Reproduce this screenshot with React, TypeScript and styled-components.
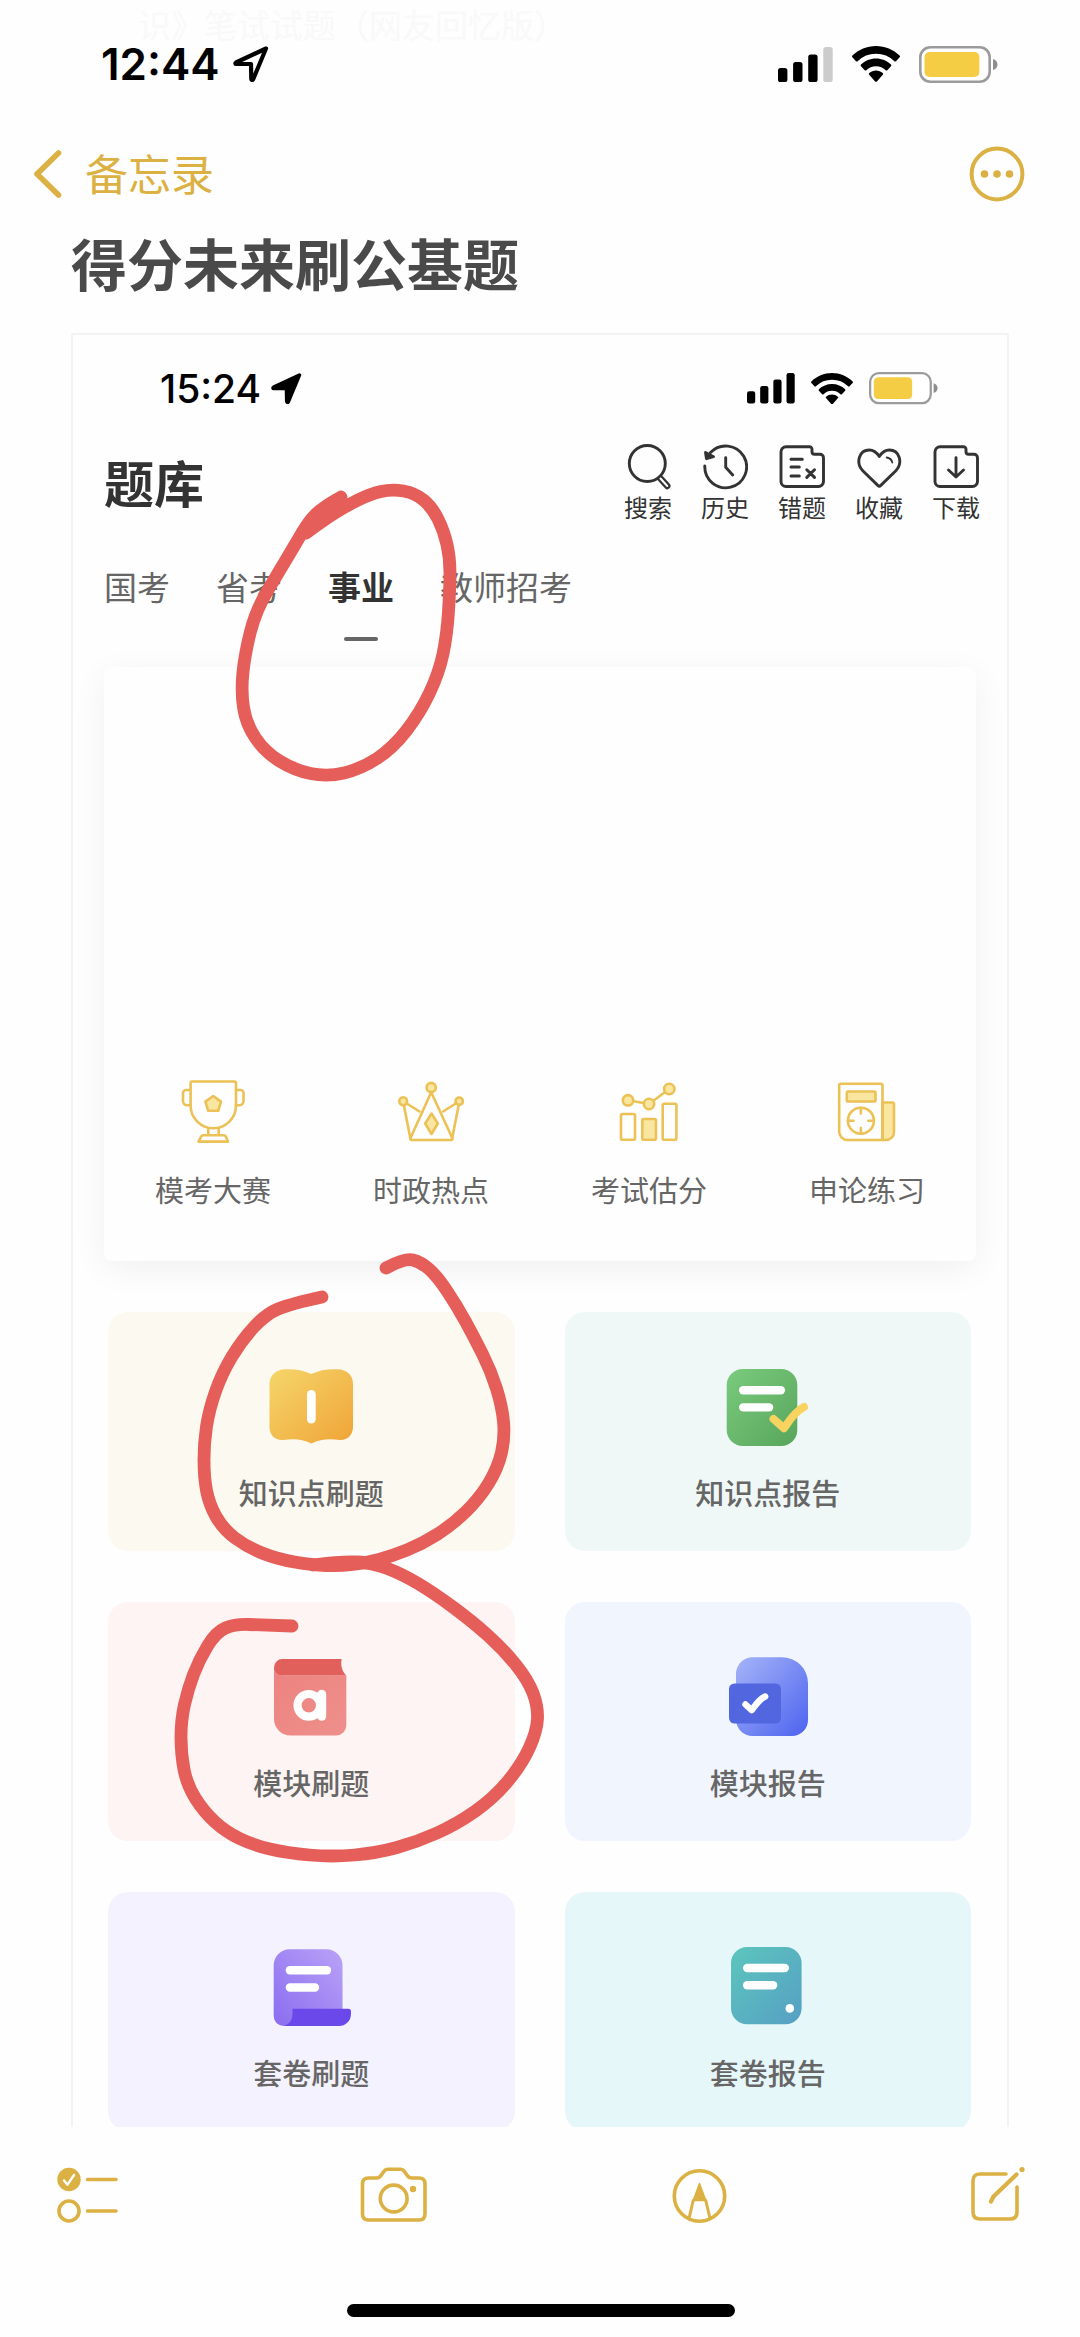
import React from 'react';
import styled, { createGlobalStyle } from 'styled-components';

const GOLD = '#dcb143';
const LINE_GOLD = '#ecc155';
const SOFT_GOLD = '#f9e6a0';
const INK = '#333333';
const PEN = '#e65e59';
const CJK = '"Noto Sans CJK SC", "Noto Sans", sans-serif';

const GlobalStyle = createGlobalStyle`
  * { box-sizing: border-box; }
  body { margin: 0; background: #fefefe; font-family: ${CJK}; }
  button { margin: 0; padding: 0; border: 0; background: none; font: inherit; color: inherit; cursor: pointer; }
  svg { display: block; flex: none; }
`;

const Screen = styled.div`
  position: relative;
  display: flex;
  flex-direction: column;
  height: 100vh;
  overflow: hidden;
  background: #fefefe;
`;

const Ghost = styled.div`
  position: absolute;
  top: 2px;
  left: 138px;
  font-size: 33px;
  line-height: 44px;
  color: #f9f9f9;
  white-space: nowrap;
`;

const StatusRow = styled.div<{ $inner?: boolean }>`
  position: relative;
  display: flex;
  flex: none;
  align-items: center;
  justify-content: space-between;
  height: ${p => (p.$inner ? 111 : 128)}px;
  padding: ${p => (p.$inner ? '0 71px 0 89px' : '0 82px 0 101px')};
`;

const Clock = styled.div<{ $inner?: boolean }>`
  display: flex;
  align-items: center;
  gap: ${p => (p.$inner ? 10 : 13)}px;
  font-family: Inter, "Liberation Sans", sans-serif;
  font-size: ${p => (p.$inner ? 39 : 44)}px;
  font-weight: ${p => (p.$inner ? 500 : 600)};
  line-height: 48px;
  color: #000;
`;

const StatusIcons = styled.div<{ $inner?: boolean }>`
  display: flex;
  align-items: center;
  gap: ${p => (p.$inner ? 16 : 19)}px;
`;

const NavBar = styled.nav`
  display: flex;
  flex: none;
  align-items: center;
  justify-content: space-between;
  height: 92px;
  padding: 0 55px 0 33px;
`;

const BackButton = styled.button`
  display: flex;
  align-items: center;
  gap: 22px;
  font-size: 43px;
  line-height: 60px;
  color: ${GOLD};
`;

const BackLabel = styled.span`
  padding-bottom: 4px;
`;

const NoteTitle = styled.h1`
  flex: none;
  margin: 0;
  padding: 0 71px 29px;
  font-size: 56px;
  font-weight: 700;
  line-height: 84px;
  color: #4a4a4a;
`;

const NoteBody = styled.main`
  flex: 1;
  min-height: 0;
  overflow-y: auto;
  scrollbar-width: none;
  padding: 0 71px;
`;

const Attachment = styled.section`
  position: relative;
  padding-bottom: 60px;
  box-shadow: inset 0 0 0 2px #f3f3f3;
`;

const PageHeader = styled.header`
  display: flex;
  align-items: center;
  justify-content: space-between;
  padding: 0 29px 0 33px;
`;

const PageTitle = styled.h2`
  margin: 0;
  padding-bottom: 4px;
  font-size: 50px;
  font-weight: 700;
  line-height: 64px;
  color: ${INK};
`;

const Tools = styled.div`
  display: flex;
  gap: 29px;
`;

const ToolButton = styled.button`
  display: flex;
  flex-direction: column;
  align-items: center;
  gap: 3px;
  width: 48px;
  font-size: 24px;
  line-height: 28px;
  color: ${INK};
  white-space: nowrap;
`;

const Tabs = styled.div`
  display: flex;
  gap: 46px;
  padding: 43px 33px 26px;
`;

const Tab = styled.button<{ $active?: boolean }>`
  display: flex;
  flex-direction: column;
  align-items: center;
  gap: 29px;
  font-size: 33px;
  font-weight: ${p => (p.$active ? 700 : 400)};
  line-height: 44px;
  color: ${p => (p.$active ? INK : '#666666')};

  &::after {
    content: '';
    width: 34px;
    height: 4px;
    border-radius: 2px;
    background: ${p => (p.$active ? '#666666' : 'transparent')};
  }
`;

const Panel = styled.div`
  margin: 0 33px;
  padding: 412px 0 50px;
  border-radius: 8px;
  background: #fefefe;
  box-shadow: 0 8px 34px rgba(0, 0, 0, 0.06);
`;

const Shortcuts = styled.div`
  display: grid;
  grid-template-columns: repeat(4, 1fr);
`;

const Shortcut = styled.button`
  display: flex;
  flex-direction: column;
  align-items: center;
  gap: 22px;
  font-size: 29px;
  line-height: 44px;
  color: #666666;
`;

const Tiles = styled.div`
  display: grid;
  grid-template-columns: 1fr 1fr;
  gap: 51px 50px;
  padding: 51px 38px 0 37px;
`;

const Tile = styled.button<{ $tint: string }>`
  display: flex;
  flex-direction: column;
  align-items: center;
  gap: 23px;
  padding: 55px 0 37px;
  border-radius: 20px;
  background: ${p => p.$tint};
  font-size: 29px;
  font-weight: 500;
  line-height: 44px;
  color: #666666;
`;

const Ink = styled.svg`
  position: absolute;
  top: 0;
  left: 0;
  width: 100%;
  pointer-events: none;
`;

const BottomBar = styled.footer`
  display: flex;
  flex: none;
  flex-direction: column;
  justify-content: space-between;
  align-items: center;
  height: 210px;
  padding: 38px 54px 20px 56px;
`;

const BottomActions = styled.div`
  display: flex;
  align-items: center;
  justify-content: space-between;
  width: 100%;
`;

const HomeIndicator = styled.div`
  width: 388px;
  height: 13px;
  border-radius: 7px;
  background: #000;
`;

/* ---------- status bar ---------- */

function Signal({ size, bars }: { size: number; bars: number }) {
  const tops = [21, 15, 7.5, 0];
  return (
    <svg width={size} height={(size * 35) / 55} viewBox="0 0 55 35">
      {tops.map((t, i) => (
        <rect key={t} x={i * 15.1} y={t} width="9.4" height={35 - t} rx="2.6" fill={i < bars ? '#000' : '#cccccc'} />
      ))}
    </svg>
  );
}

function Wifi({ size }: { size: number }) {
  return (
    <svg width={size} height={(size * 36) / 48} viewBox="0 0 48 36" fill="#000">
      <path d="M24 0C33 0 41.500 3.700 47.600 9.600c.5.5.5 1.200 0 1.700l-3.600 3.900c-.5.5-1.100.5-1.600 0A26.500 26.500 0 0 0 24 7.800 26.500 26.500 0 0 0 5.600 15.200c-.5.5-1.100.5-1.600 0L.4 11.300c-.5-.5-.5-1.200 0-1.700C6.500 3.700 15 0 24 0z" />
      <path d="M24 12.500c5.800 0 11.100 2.300 15 6.100.5.5.5 1.100 0 1.600l-3.700 4c-.5.500-1.100.5-1.600 0A14 14 0 0 0 24 20.300a14 14 0 0 0-9.700 3.900c-.5.5-1.100.5-1.600 0l-3.700-4c-.5-.5-.5-1.100 0-1.600 3.900-3.800 9.200-6.100 15-6.100z" />
      <path d="M24 24.600c2.500 0 4.900.9 6.700 2.400.6.5.6 1.200.1 1.700l-5.900 6.700c-.5.6-1.300.6-1.800 0l-5.900-6.700c-.5-.5-.5-1.200.1-1.700 1.800-1.500 4.200-2.400 6.700-2.400z" />
    </svg>
  );
}

function Battery({ size, level }: { size: number; level: number }) {
  return (
    <svg width={size} height={(size * 37) / 79} viewBox="0 0 79 37">
      <rect x="1.300" y="1.300" width="69.400" height="34.400" rx="10" fill="#fff" stroke="#9b9b9b" strokeWidth="2.600" />
      <rect x="5.500" y="6" width={61 * level} height="25" rx="5" fill="#f5cd45" />
      <path d="M74 13c2.700.8 4.500 3 4.500 5.500s-1.800 4.700-4.500 5.500z" fill="#8d8d8d" />
    </svg>
  );
}

function LocationArrow({ size, filled }: { size: number; filled?: boolean }) {
  return (
    <svg width={size} height={size} viewBox="0 0 36 36">
      <path
        d="M33 2.500 3 16.500c-1 .6-.8 1.500.3 1.500H18l.3 15c.1 1.300 1.300 1.400 1.900.3z"
        fill={filled ? '#000' : 'none'}
        stroke="#000"
        strokeWidth="4.200"
        strokeLinejoin="round"
      />
    </svg>
  );
}

/* ---------- header tools ---------- */

function ToolIcon({ children }: { children: React.ReactNode }) {
  return (
    <svg width="46" height="46" viewBox="0 0 46 46" fill="none" stroke={INK} strokeWidth="2.900" strokeLinecap="round" strokeLinejoin="round">
      {children}
    </svg>
  );
}

const FOLDER = 'M7 2.700H30.500a2.500 2.500 0 0 1 2.500 2.500V7.700a2.500 2.500 0 0 0 2.500 2.500H41a3.500 3.500 0 0 1 3.500 3.500V37.500a5 5 0 0 1-5 5H7a5 5 0 0 1-5-5V7.700a5 5 0 0 1 5-5z';

const tools = [
  {
    label: '搜索',
    icon: (
      <>
        <circle cx="22.300" cy="19.500" r="18" />
        <path d="M35.500 34.500 42.300 42" strokeWidth="6.400" />
        <path d="M35.500 34.500 42.300 42" stroke="#fff" strokeWidth="2" />
      </>
    ),
  },
  {
    label: '历史',
    icon: (
      <>
        <path d="M2.800 22A20.900 20.900 0 1 0 8.500 8.500" />
        <path d="M3.500 8.500 11.500 12.700 4.500 14.700z" fill={INK} />
        <path d="M23.700 13.700V23.300L30.700 31" />
      </>
    ),
  },
  {
    label: '错题',
    icon: (
      <>
        <path d={FOLDER} />
        <path d="M12 15.200H23.300M12 22.900H20.300M12 31.900H20.300M27.800 25.800 35.500 33.400M35.500 25.800 27.800 33.400" strokeWidth="3" />
      </>
    ),
  },
  {
    label: '收藏',
    icon: (
      <>
        <path d="M21.800 41.400 7 27C-1 18.500 3.500 6 13.200 6c4.600 0 7.400 2.300 10.100 6.500C26 8.300 28.800 6 33.400 6 43.100 6 47.600 18.500 39.600 27L24.800 41.400c-1 1-2 1-3 0z" />
        <path d="M30.700 13.500c3 .5 5 2.300 5.600 5" strokeWidth="1.800" />
      </>
    ),
  },
  {
    label: '下载',
    icon: (
      <>
        <path d={FOLDER} />
        <path d="M23 13.700V32.500M15.500 26 23 33 30.500 26" />
      </>
    ),
  },
];

/* ---------- panel shortcuts ---------- */

function LineIcon({ children }: { children: React.ReactNode }) {
  return (
    <svg width="66" height="66" viewBox="0 0 66 66" fill="none" stroke={LINE_GOLD} strokeWidth="2.600" strokeLinejoin="round" strokeLinecap="round">
      {children}
    </svg>
  );
}

const shortcuts = [
  {
    label: '模考大赛',
    icon: (
      <>
        <path d="M12 2.500H54.500a1.500 1.500 0 0 1 1.500 1.500V26.500a22.700 22.700 0 0 1-45.400 0V4a1.500 1.500 0 0 1 1.400-1.500z" />
        <path d="M10.500 11H6a3 3 0 0 0-3 3V22c0 2.500 2 4.300 4.300 4.300H10.500M56 11h4.500a3 3 0 0 1 3 3V22c0 2.500-2 4.300-4.300 4.300H56" />
        <path d="M33.200 17 41 22.600 38.200 31.800H28.200L25.400 22.600z" fill={SOFT_GOLD} />
        <path d="M28.300 49.500V56M38.700 49.500V56M23 56.300H44a2 2 0 0 1 1.700 1L48 62.600H18.500L21.300 57.300a2 2 0 0 1 1.700-1z" />
      </>
    ),
  },
  {
    label: '时政热点',
    icon: (
      <>
        <path d="M33.200 13.200 54.500 59.500a1.300 1.300 0 0 1-1.200 1.500H13.500a1.300 1.300 0 0 1-1.200-1.500z" />
        <path d="M6 27 12.500 60M8.700 24.500 21.500 32.500M60.500 27 54 60M57.800 24.500 45 32.500" />
        <circle cx="33.200" cy="8.500" r="4.600" fill={SOFT_GOLD} />
        <circle cx="5.200" cy="22.200" r="3.900" fill={SOFT_GOLD} />
        <circle cx="61.200" cy="22.200" r="3.700" fill={SOFT_GOLD} />
        <path d="M33.500 34.500 39.800 44.500 33.500 55 27.200 44.500z" fill={SOFT_GOLD} />
      </>
    ),
  },
  {
    label: '考试估分',
    icon: (
      <>
        <path d="M12 21.300 33 25 53.300 10" />
        <rect x="5" y="35" width="14" height="25.700" rx="1.500" />
        <rect x="26.300" y="40" width="13.700" height="20.700" rx="1.500" fill={SOFT_GOLD} />
        <rect x="46.700" y="24.700" width="13.700" height="36" rx="1.500" />
        <circle cx="12" cy="21.300" r="5.200" fill={SOFT_GOLD} />
        <circle cx="33" cy="25" r="5.200" fill={SOFT_GOLD} />
        <circle cx="53.300" cy="10" r="5.200" fill={SOFT_GOLD} />
      </>
    ),
  },
  {
    label: '申论练习',
    icon: (
      <>
        <path d="M48.500 23.500H58.500a1.500 1.500 0 0 1 1.500 1.500V53a8 8 0 0 1-8 8H48.500z" fill={SOFT_GOLD} />
        <path d="M6.700 4.700H47a1.500 1.500 0 0 1 1.500 1.500V61H13.500A8.300 8.300 0 0 1 5.200 52.700V6.200a1.500 1.500 0 0 1 1.500-1.500z" />
        <rect x="12.800" y="12.500" width="28.700" height="10" rx="1" fill={SOFT_GOLD} />
        <circle cx="26.900" cy="41.700" r="13" />
        <path d="M26.900 29V34.500M26.900 49V54.500M14 41.700H19.500M34.300 41.700H39.800" />
      </>
    ),
  },
];

/* ---------- tiles ---------- */

function Fade({ id, from, to, flip }: { id: string; from: string; to: string; flip?: boolean }) {
  return (
    <defs>
      <linearGradient id={id} x1={flip ? 1 : 0} y1="0" x2={flip ? 0 : 1} y2="1">
        <stop offset="0" stopColor={from} />
        <stop offset="1" stopColor={to} />
      </linearGradient>
    </defs>
  );
}

const tiles = [
  {
    label: '知识点刷题',
    tint: '#fcf9f0',
    icon: (
      <>
        <Fade id="book" from="#f5d66b" to="#f0a437" />
        <path d="M.5 17C.5 8 7 2.500 16 2.200 26 1.800 34 3 42.200 7 50 3 59 1.800 68.500 2.200 78 2.500 84 8 84 17V60c0 8-6 13.500-13 13C60 71.500 52 72 42.200 76.500 33 72 25 71.500 14 73 6 73.500.5 68 .5 60z" fill="url(#book)" />
        <rect x="38" y="23" width="8.700" height="33.500" rx="4.300" fill="#fff" />
      </>
    ),
  },
  {
    label: '知识点报告',
    tint: '#eff8f7',
    icon: (
      <>
        <Fade id="report" from="#7acb7d" to="#58a55c" />
        <rect x=".7" y="2" width="70.600" height="77" rx="16" fill="url(#report)" />
        <rect x="13" y="19" width="46" height="8.400" rx="4.200" fill="#fff" />
        <rect x="13" y="36.200" width="34.300" height="8.400" rx="4.200" fill="#fff" />
        <path d="M47.500 52 58 61.200C62 56.500 66.500 46 78 40" fill="none" stroke="#f8d35f" strokeWidth="8" strokeLinecap="round" strokeLinejoin="round" />
      </>
    ),
  },
  {
    label: '模块刷题',
    tint: '#fdf4f3',
    icon: (
      <>
        <Fade id="module" from="#ed8380" to="#ee8f8b" />
        <path d="M5 10.500V62A16.500 16.500 0 0 0 21.500 78.500H67.300a10 10 0 0 0 10-10V18.500H13z" fill="url(#module)" />
        <path d="M13.300 2H72.700c-1.200 6 0 12 4.600 16.500H13.300a8.250 8.250 0 0 1 0-16.500z" fill="#e1605c" />
        <circle cx="39.800" cy="48.300" r="11.300" fill="none" stroke="#fff" strokeWidth="8.200" />
        <path d="M52.700 37.300V59.200" stroke="#fff" strokeWidth="9" strokeLinecap="round" />
      </>
    ),
  },
  {
    label: '模块报告',
    tint: '#f1f5fe',
    icon: (
      <>
        <Fade id="check" from="#a6b4f8" to="#4c63ef" />
        <path d="M26.500.2H56A26 26 0 0 1 82 26.200V63a16 16 0 0 1-16 16H26.500A16.500 16.500 0 0 1 10 62.500V16.700A16.500 16.500 0 0 1 26.500.2z" fill="url(#check)" />
        <rect x="3" y="26.500" width="52" height="40" rx="5.500" fill="#5266df" />
        <path d="M19.500 47.500 25.700 53.200C29 49 32.500 42.500 39.200 39.500" fill="none" stroke="#fff" strokeWidth="6.400" strokeLinecap="round" strokeLinejoin="round" />
      </>
    ),
  },
  {
    label: '套卷刷题',
    tint: '#f4f2fe',
    icon: (
      <>
        <Fade id="scroll" from="#b9a2f7" to="#8a6cf0" flip />
        <path d="M20.700 2.300H57.500a16 16 0 0 1 16 16V68L16 79C9 79 4.700 75 4.700 68V18.300a16 16 0 0 1 16-16z" fill="url(#scroll)" />
        <path d="M23.500 61.700H79.500a2.500 2.500 0 0 1 2.500 2.500V67a12 12 0 0 1-12 12H14C20 78 23.500 73 23.500 67z" fill="#6a48ea" />
        <rect x="16.700" y="19" width="45.500" height="8.400" rx="4.200" fill="#fff" />
        <rect x="16.700" y="36.300" width="33.500" height="8.400" rx="4.200" fill="#fff" />
      </>
    ),
  },
  {
    label: '套卷报告',
    tint: '#e6f7fa',
    icon: (
      <>
        <Fade id="paper" from="#5cc6bd" to="#569fc4" />
        <rect x="5" y="0" width="70.600" height="77.200" rx="16" fill="url(#paper)" />
        <rect x="17" y="16.800" width="46" height="8.400" rx="4.200" fill="#fff" />
        <rect x="17" y="34" width="34.300" height="8.400" rx="4.200" fill="#fff" />
        <circle cx="63.800" cy="61.400" r="4.300" fill="#fff" />
      </>
    ),
  },
];

/* ---------- pen marks over the attachment ---------- */

type Point = [number, number];

const strokes: Point[][] = [
  [[341, 497], [323, 507], [309, 521], [296, 543], [280, 570], [256, 610], [245, 653], [241, 691], [246, 724], [265, 752], [294, 770], [327, 777], [361, 769], [393, 748], [420, 713], [439, 673], [447, 635], [450, 588], [450, 558], [444, 531], [432, 507], [415, 493], [392, 489], [370, 494], [346, 506], [325, 519], [306, 533]],
  [[322, 1297], [290, 1304], [266, 1314], [242, 1340], [222, 1373], [209, 1410], [204, 1443], [204, 1477], [209, 1504], [223, 1529], [247, 1547], [277, 1559], [312, 1565], [340, 1566], [366, 1563], [392, 1556], [422, 1544], [452, 1525], [479, 1499], [498, 1468], [505, 1437], [502, 1406], [491, 1371], [474, 1337], [457, 1306], [437, 1276], [421, 1262], [405, 1258], [386, 1268]],
  [[292, 1626], [262, 1625], [235, 1624], [216, 1632], [199, 1660], [188, 1689], [181, 1720], [181, 1754], [187, 1785], [204, 1812], [226, 1832], [253, 1845], [287, 1853], [332, 1857], [377, 1853], [417, 1842], [457, 1824], [494, 1798], [522, 1764], [537, 1731], [538, 1706], [528, 1680], [504, 1650], [473, 1622], [434, 1593], [402, 1574], [373, 1563], [343, 1561], [313, 1565]],
];

// Quadratic curves that meet halfway between neighbouring pen samples.
function smooth(pts: Point[]) {
  let d = `M${pts[0][0]} ${pts[0][1]}`;
  for (let i = 1; i < pts.length - 1; i++) {
    const [x, y] = pts[i];
    const [nx, ny] = pts[i + 1];
    const last = i === pts.length - 2;
    d += `Q${x} ${y} ${last ? nx : (x + nx) / 2} ${last ? ny : (y + ny) / 2}`;
  }
  return d;
}

/* ---------- bottom toolbar ---------- */

const bottomActions = [
  {
    label: '核对清单',
    width: 62,
    icon: (
      <>
        <circle cx="13" cy="14.500" r="11.700" fill={GOLD} stroke="none" />
        <path d="M8 15.500 11.500 19.700 18 10" stroke="#fff" strokeWidth="2.400" />
        <circle cx="13" cy="46" r="10" />
        <path d="M31.500 14.500H60M31.500 46H60" />
      </>
    ),
  },
  {
    label: '相机',
    width: 70,
    icon: (
      <>
        <path d="M9.500 13H17.500c2 0 3.300-.7 4.300-2.200L25 6.200c.9-1.400 2-2 3.700-2H41.500c1.700 0 2.800.6 3.700 2l3.200 4.600c1 1.500 2.300 2.200 4.300 2.200H60c4 0 6 2 6 6V49c0 4-2 6-6 6H9.500c-4 0-6-2-6-6V19c0-4 2-6 6-6z" />
        <circle cx="34.700" cy="33.500" r="13.400" />
        <circle cx="54" cy="24" r="3.200" fill={GOLD} stroke="none" />
      </>
    ),
  },
  {
    label: '标记',
    width: 58,
    icon: (
      <>
        <circle cx="28.500" cy="31" r="25.200" />
        <path d="M28.500 18.500 34.800 35.500H22.200z" fill={GOLD} strokeWidth="1.500" />
        <path d="M22.200 35.500 18 53.500M34.800 35.500 39 53.500" strokeWidth="3" />
      </>
    ),
  },
  {
    label: '新建备忘录',
    width: 56,
    icon: (
      <>
        <path d="M36 9H10c-4.600 0-7 2.400-7 7V47c0 4.600 2.400 7 7 7H40c4.600 0 7-2.400 7-7V22" />
        <path d="M21 36.500 23.500 31.500 46.500 9.500" strokeWidth="4.200" />
        <circle cx="52" cy="4.500" r="2.600" fill={GOLD} stroke="none" />
      </>
    ),
  },
];

export default function App() {
  return (
    <Screen>
      <GlobalStyle />
      <Ghost aria-hidden="true">识》笔试试题（网友回忆版）</Ghost>

      <StatusRow>
        <Clock>
          12:44
          <LocationArrow size={36} />
        </Clock>
        <StatusIcons>
          <Signal size={55} bars={3} />
          <Wifi size={48} />
          <Battery size={79} level={0.9} />
        </StatusIcons>
      </StatusRow>

      <NavBar>
        <BackButton>
          <svg width="30" height="50" viewBox="0 0 30 50" fill="none" stroke={GOLD} strokeWidth="5.600" strokeLinecap="round" strokeLinejoin="round">
            <path d="M25.500 4 4 25 25.500 46" />
          </svg>
          <BackLabel>备忘录</BackLabel>
        </BackButton>
        <button aria-label="更多">
          <svg width="56" height="56" viewBox="0 0 56 56">
            <circle cx="28" cy="28" r="25.400" fill="none" stroke={GOLD} strokeWidth="4" />
            <circle cx="15.500" cy="28" r="3.800" fill={GOLD} />
            <circle cx="28" cy="28" r="3.800" fill={GOLD} />
            <circle cx="40.500" cy="28" r="3.800" fill={GOLD} />
          </svg>
        </button>
      </NavBar>

      <NoteTitle>得分未来刷公基题</NoteTitle>

      <NoteBody>
        <Attachment>
          <StatusRow $inner>
            <Clock $inner>
              15:24
              <LocationArrow size={31} filled />
            </Clock>
            <StatusIcons $inner>
              <Signal size={48} bars={4} />
              <Wifi size={42} />
              <Battery size={69} level={0.72} />
            </StatusIcons>
          </StatusRow>

          <PageHeader>
            <PageTitle>题库</PageTitle>
            <Tools>
              {tools.map(t => (
                <ToolButton key={t.label}>
                  <ToolIcon>{t.icon}</ToolIcon>
                  {t.label}
                </ToolButton>
              ))}
            </Tools>
          </PageHeader>

          <Tabs>
            {['国考', '省考', '事业', '教师招考'].map(t => (
              <Tab key={t} $active={t === '事业'}>
                {t}
              </Tab>
            ))}
          </Tabs>

          <Panel>
            <Shortcuts>
              {shortcuts.map(s => (
                <Shortcut key={s.label}>
                  <LineIcon>{s.icon}</LineIcon>
                  {s.label}
                </Shortcut>
              ))}
            </Shortcuts>
          </Panel>

          <Tiles>
            {tiles.map(t => (
              <Tile key={t.label} $tint={t.tint}>
                <svg width="84" height="80" viewBox="0 0 84 80">
                  {t.icon}
                </svg>
                {t.label}
              </Tile>
            ))}
          </Tiles>

          <Ink viewBox="71 333 938 1795" fill="none" stroke={PEN} strokeWidth="12.800" strokeLinecap="round" strokeLinejoin="round" aria-hidden="true">
            {strokes.map((s, i) => (
              <path key={i} d={smooth(s)} />
            ))}
            <path d="M339 501Q320 511 309 526" strokeWidth="16" />
          </Ink>
        </Attachment>
      </NoteBody>

      <BottomBar>
        <BottomActions>
          {bottomActions.map(a => (
            <button key={a.label} aria-label={a.label}>
              <svg width={a.width} height="58" viewBox={`0 0 ${a.width} 58`} fill="none" stroke={GOLD} strokeWidth="3.600" strokeLinecap="round" strokeLinejoin="round">
                {a.icon}
              </svg>
            </button>
          ))}
        </BottomActions>
        <HomeIndicator />
      </BottomBar>
    </Screen>
  );
}
